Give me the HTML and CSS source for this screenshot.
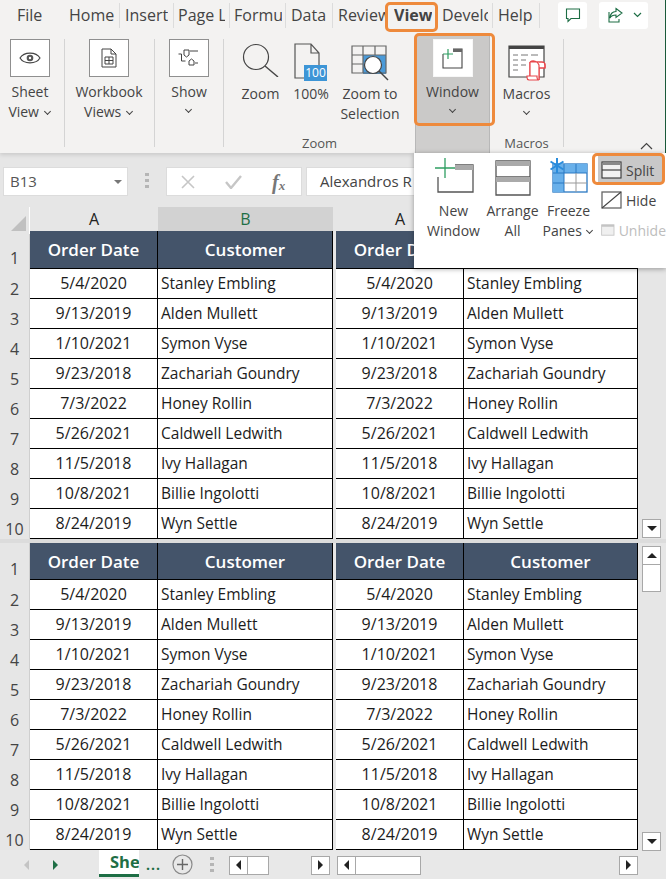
FILE: index.html
```html
<!DOCTYPE html>
<html lang="en">
<head>
<meta charset="utf-8">
<title>Excel view split</title>
<link rel="stylesheet" href="styles.css">
</head>
<body>
<div class="app">
  <header class="ribbon">
    <nav class="tabs">
      <span class="tab w-file"><span class="tt">File</span></span>
      <span class="tab w-home sep"><span class="tt">Home</span></span>
      <span class="tab w-insert sep"><span class="tt">Insert</span></span>
      <span class="tab w-page sep"><span class="tt">Page L</span></span>
      <span class="tab w-form sep"><span class="tt">Formu</span></span>
      <span class="tab w-data sep"><span class="tt">Data</span></span>
      <span class="tab w-review"><span class="tt">Review</span></span>
      <span class="tab w-view active"><span class="tt">View</span></span>
      <span class="tab w-dev sep"><span class="tt">Develo</span></span>
      <span class="tab w-help sep"><span class="tt">Help</span></span>
      <span class="tabbtn comment">
        <svg width="16" height="16" viewBox="0 0 16 16"><path d="M1.500 2h13v9.500H6L3 14.500v-3H1.500z" fill="none" stroke="#1e6e45" stroke-width="1.100"/></svg>
      </span>
      <span class="tabbtn share">
        <svg width="18" height="18" viewBox="0 0 18 18"><path d="M10 2.500l6 4.500-6 4.500V9c-3 0-5 1-6 3 0-4 2.500-6.500 6-6.500z M3 6v10h10v-3" fill="none" stroke="#1e6e45" stroke-width="1.100"/></svg>
        <svg width="9" height="6" viewBox="0 0 9 6"><path d="M1 1l3.500 3.500L8 1" fill="none" stroke="#1e6e45" stroke-width="1.200"/></svg>
      </span>
    </nav>
    <div class="groups">
      <div class="rb-btn g-sheet">
        <span class="iconbox">
          <svg width="22" height="14" viewBox="0 0 22 14"><path d="M1 7c4-6.500 16-6.500 20 0-4 6.500-16 6.500-20 0z" fill="none" stroke="#444" stroke-width="1.200"/><circle cx="11" cy="7" r="3.300" fill="#555"/><circle cx="11" cy="7" r="1.200" fill="#fff"/></svg>
        </span>
        <span class="lbl">Sheet<br>View <i class="chev"></i></span>
      </div>
      <div class="rb-sep s1"></div>
      <div class="rb-btn g-book">
        <span class="iconbox">
          <svg width="16" height="20" viewBox="0 0 16 20"><path d="M1 1h9l5 5v13H1z M10 1v5h5" fill="none" stroke="#444"/><path d="M4 9h8v7H4z M8 9v7 M4 12.500h8" fill="none" stroke="#444"/></svg>
        </span>
        <span class="lbl">Workbook<br>Views <i class="chev"></i></span>
      </div>
      <div class="rb-sep s2"></div>
      <div class="rb-btn g-show">
        <span class="iconbox">
          <svg width="22" height="18" viewBox="0 0 22 18"><path d="M6 1h5v5l-2.500 2L6 6z M0.500 5h3v7h4 M12 2h8 M17 14h3" fill="none" stroke="#444"/><path d="M11 16v-4l2.500-2 2.500 2v4z" fill="none" stroke="#444"/></svg>
        </span>
        <span class="lbl">Show<br><i class="chev solo"></i></span>
      </div>
      <div class="rb-sep s3"></div>
      <div class="zoomgroup">
        <div class="zoomitems">
          <div class="rb-btn big w-zoom">
            <svg class="bigicon" width="40" height="34" viewBox="0 0 40 34"><circle cx="15" cy="14" r="12.500" fill="none" stroke="#444" stroke-width="1.200"/><path d="M24 23l13 11" stroke="#444" stroke-width="1.400"/></svg>
            <span class="lbl">Zoom</span>
          </div>
          <div class="rb-btn big w-100">
            <svg class="bigicon" width="36" height="36" viewBox="0 0 36 36"><path d="M2 1h16l8 9v25H2z M18 1v9h8" fill="none" stroke="#555" stroke-width="1.200"/></svg>
            <span class="pct">100</span>
            <span class="lbl">100%</span>
          </div>
          <div class="rb-btn big w-sel">
            <svg class="bigicon" width="38" height="36" viewBox="0 0 38 36"><rect x="12" y="10" width="23" height="19" fill="#4a9ad8"/><path d="M1 1h34v27H1z M1 10h34 M1 19h11 M12 1v27 M24 1v9" fill="none" stroke="#666" stroke-width="1.200"/><circle cx="22" cy="20" r="8.500" fill="#fff" stroke="#444" stroke-width="1.200"/><path d="M28 26l9 9" stroke="#444" stroke-width="1.400"/></svg>
            <span class="lbl">Zoom to<br>Selection</span>
          </div>
        </div>
        <span class="grouplbl">Zoom</span>
      </div>
      <div class="windowcol">
        <div class="rb-btn g-win">
          <span class="iconbox">
            <svg width="21" height="21" viewBox="0 0 21 21"><path d="M1 6v14h19V1h-9" fill="none" stroke="#444" stroke-width="1.100"/><rect x="11" y="1" width="9" height="3" fill="#666"/><path d="M6 1v10 M1 6h10" fill="none" stroke="#2f9e62" stroke-width="1.200"/></svg>
          </span>
          <span class="lbl">Window<br><i class="chev solo"></i></span>
        </div>
      </div>
      <div class="macrocol">
        <div class="rb-btn big w-mac">
          <svg class="bigicon" width="38" height="36" viewBox="0 0 38 36"><path d="M1 1h35v31H1z" fill="#fff" stroke="#444" stroke-width="1.200"/><rect x="1" y="1" width="35" height="3" fill="#444"/><path d="M5 10h5 M13 10h7 M23 10h7 M5 15h5 M13 15h5 M5 20h5 M13 20h5 M5 25h5" stroke="#777"/><path d="M22 17h12a3 3 0 0 1 3 3v3h-6v12M22 17v14" fill="#fff" stroke="#e8474c" stroke-width="1.200"/><path d="M22 17h9v18H22z" fill="#fff"/><path d="M22 17h12a3 3 0 0 1 3 3v3h-6M22 17a6 6 0 0 1 9 3v15M22 17v14" fill="none" stroke="#e8474c" stroke-width="1.200"/><path d="M19 31h10v1.500a2.500 2.500 0 0 0 2 2.500H21a2.500 2.500 0 0 1-2-2.500z" fill="#fff" stroke="#e8474c" stroke-width="1.200"/></svg>
          <span class="lbl">Macros<br><i class="chev solo"></i></span>
        </div>
        <span class="grouplbl">Macros</span>
      </div>
      <div class="rb-sep s4"></div>
      <svg class="collapse" width="13" height="8" viewBox="0 0 13 8"><path d="M1 7l5.500-5.500L12 7" fill="none" stroke="#444" stroke-width="1.200"/></svg>
    </div>
  </header>

  <div class="formulabar">
    <div class="namebox">B13<i class="caret"></i></div>
    <div class="grip"></div>
    <div class="fxbox">
      <svg width="14" height="14" viewBox="0 0 14 14"><path d="M1 1l12 12M13 1L1 13" stroke="#c6c6c6" stroke-width="1.600"/></svg>
      <svg width="17" height="14" viewBox="0 0 17 14"><path d="M1 7l5 6L16 1" fill="none" stroke="#c6c6c6" stroke-width="2.400"/></svg>
      <span class="fx">f<sub>x</sub></span>
    </div>
    <div class="formula">Alexandros R</div>
  </div>

  <section class="sheet">
    <div class="pane top">
      <div class="cells">
        <div class="colhead">
          <div class="corner"><i></i></div>
          <div class="ch">A</div>
          <div class="ch sel">B</div>
          <div class="gapcell"></div>
          <div class="ch">A</div>
          <div class="ch">B</div>
        </div>
        <div class="row head"><div class="rh">1</div><div class="c">Order Date</div><div class="c">Customer</div><div class="gapcell"></div><div class="c">Order Date</div><div class="c">Customer</div></div>
        <div class="row"><div class="rh">2</div><div class="c d">5/4/2020</div><div class="c">Stanley Embling</div><div class="gapcell"></div><div class="c d">5/4/2020</div><div class="c">Stanley Embling</div></div>
        <div class="row"><div class="rh">3</div><div class="c d">9/13/2019</div><div class="c">Alden Mullett</div><div class="gapcell"></div><div class="c d">9/13/2019</div><div class="c">Alden Mullett</div></div>
        <div class="row"><div class="rh">4</div><div class="c d">1/10/2021</div><div class="c">Symon Vyse</div><div class="gapcell"></div><div class="c d">1/10/2021</div><div class="c">Symon Vyse</div></div>
        <div class="row"><div class="rh">5</div><div class="c d">9/23/2018</div><div class="c">Zachariah Goundry</div><div class="gapcell"></div><div class="c d">9/23/2018</div><div class="c">Zachariah Goundry</div></div>
        <div class="row"><div class="rh">6</div><div class="c d">7/3/2022</div><div class="c">Honey Rollin</div><div class="gapcell"></div><div class="c d">7/3/2022</div><div class="c">Honey Rollin</div></div>
        <div class="row"><div class="rh">7</div><div class="c d">5/26/2021</div><div class="c">Caldwell Ledwith</div><div class="gapcell"></div><div class="c d">5/26/2021</div><div class="c">Caldwell Ledwith</div></div>
        <div class="row"><div class="rh">8</div><div class="c d">11/5/2018</div><div class="c">Ivy Hallagan</div><div class="gapcell"></div><div class="c d">11/5/2018</div><div class="c">Ivy Hallagan</div></div>
        <div class="row"><div class="rh">9</div><div class="c d">10/8/2021</div><div class="c">Billie Ingolotti</div><div class="gapcell"></div><div class="c d">10/8/2021</div><div class="c">Billie Ingolotti</div></div>
        <div class="row"><div class="rh">10</div><div class="c d">8/24/2019</div><div class="c">Wyn Settle</div><div class="gapcell"></div><div class="c d">8/24/2019</div><div class="c">Wyn Settle</div></div>
      </div>
      <div class="vscroll">
        <span class="vspace"></span>
        <span class="sb-btn"><i class="tri down"></i></span>
      </div>
    </div>
    <div class="splitbar"></div>
    <div class="pane bottom">
      <div class="cells">
        <div class="row head"><div class="rh">1</div><div class="c">Order Date</div><div class="c">Customer</div><div class="gapcell"></div><div class="c">Order Date</div><div class="c">Customer</div></div>
        <div class="row"><div class="rh">2</div><div class="c d">5/4/2020</div><div class="c">Stanley Embling</div><div class="gapcell"></div><div class="c d">5/4/2020</div><div class="c">Stanley Embling</div></div>
        <div class="row"><div class="rh">3</div><div class="c d">9/13/2019</div><div class="c">Alden Mullett</div><div class="gapcell"></div><div class="c d">9/13/2019</div><div class="c">Alden Mullett</div></div>
        <div class="row"><div class="rh">4</div><div class="c d">1/10/2021</div><div class="c">Symon Vyse</div><div class="gapcell"></div><div class="c d">1/10/2021</div><div class="c">Symon Vyse</div></div>
        <div class="row"><div class="rh">5</div><div class="c d">9/23/2018</div><div class="c">Zachariah Goundry</div><div class="gapcell"></div><div class="c d">9/23/2018</div><div class="c">Zachariah Goundry</div></div>
        <div class="row"><div class="rh">6</div><div class="c d">7/3/2022</div><div class="c">Honey Rollin</div><div class="gapcell"></div><div class="c d">7/3/2022</div><div class="c">Honey Rollin</div></div>
        <div class="row"><div class="rh">7</div><div class="c d">5/26/2021</div><div class="c">Caldwell Ledwith</div><div class="gapcell"></div><div class="c d">5/26/2021</div><div class="c">Caldwell Ledwith</div></div>
        <div class="row"><div class="rh">8</div><div class="c d">11/5/2018</div><div class="c">Ivy Hallagan</div><div class="gapcell"></div><div class="c d">11/5/2018</div><div class="c">Ivy Hallagan</div></div>
        <div class="row"><div class="rh">9</div><div class="c d">10/8/2021</div><div class="c">Billie Ingolotti</div><div class="gapcell"></div><div class="c d">10/8/2021</div><div class="c">Billie Ingolotti</div></div>
        <div class="row"><div class="rh">10</div><div class="c d">8/24/2019</div><div class="c">Wyn Settle</div><div class="gapcell"></div><div class="c d">8/24/2019</div><div class="c">Wyn Settle</div></div>
      </div>
      <div class="vscroll">
        <span class="sb-btn"><i class="tri up"></i></span>
        <span class="sb-thumb"></span>
        <span class="vspace"></span>
        <span class="sb-btn"><i class="tri down"></i></span>
      </div>
    </div>
  </section>

  <footer class="tabbar">
    <i class="nav prev"></i>
    <i class="nav next"></i>
    <div class="sheettab">She</div>
    <span class="more">...</span>
    <span class="plus">
      <svg width="21" height="21" viewBox="0 0 21 21"><circle cx="10.500" cy="10.500" r="9.500" fill="none" stroke="#8a8a8a" stroke-width="1.200"/><path d="M10.500 5v11M5 10.500h11" stroke="#666" stroke-width="1.400"/></svg>
    </span>
    <div class="grip small"></div>
    <div class="hscroll one">
      <span class="hb"><i class="tri left"></i></span>
      <span class="hthumb t1"></span>
      <span class="hspace"></span>
      <span class="hb"><i class="tri right"></i></span>
    </div>
    <div class="hscroll two">
      <span class="hb"><i class="tri left"></i></span>
      <span class="hthumb t2"></span>
      <span class="hspace"></span>
      <span class="hb"><i class="tri right"></i></span>
    </div>
  </footer>

  <aside class="popup">
    <div class="pop-btn b-new">
      <svg width="40" height="39" viewBox="0 0 40 39"><path d="M4 20V35H39V8H21" fill="none" stroke="#555" stroke-width="1.300"/><rect x="21" y="8" width="18" height="5" fill="#aaa"/><path d="M11 1v20M1 11h20" stroke="#2f9e62" stroke-width="1.300"/></svg>
      <span>New<br>Window</span>
    </div>
    <div class="pop-btn b-arr">
      <svg width="36" height="39" viewBox="0 0 36 39"><path d="M1 4h34v34H1z M1 20h34" fill="none" stroke="#555" stroke-width="1.300"/><rect x="1" y="4" width="34" height="5" fill="#aaa"/><rect x="1" y="20" width="34" height="5" fill="#aaa"/></svg>
      <span>Arrange<br>All</span>
    </div>
    <div class="pop-btn b-frz">
      <svg width="38" height="39" viewBox="0 0 38 39"><rect x="3" y="7" width="34" height="28" fill="#fff" stroke="#2a78c2" stroke-width="1.300"/><rect x="14" y="7" width="23" height="9" fill="#69b0ea"/><rect x="3" y="7" width="11" height="28" fill="#69b0ea"/><path d="M3 16h34M14 7v28" stroke="#2a78c2"/><path d="M14 26h23M26 16v19" stroke="#999"/><path d="M26 7v9M3 26h11" stroke="#2a78c2"/><path d="M7 1v15M0.500 4.500l13 8M13.500 4.500l-13 8" stroke="#2a8cdc" stroke-width="2"/></svg>
      <span>Freeze<br>Panes <i class="chev"></i></span>
    </div>
    <div class="pop-list">
      <div class="pop-item on">
        <svg width="21" height="18" viewBox="0 0 21 18"><rect x="1" y="1" width="19" height="16" fill="#f2f2f2" stroke="#333" stroke-width="1.100"/><rect x="1.500" y="1.500" width="18" height="2.500" fill="#8a8a8a"/><path d="M1 9h19" stroke="#333" stroke-width="1.100"/></svg>
        <span>Split</span>
      </div>
      <div class="pop-item">
        <svg width="21" height="18" viewBox="0 0 21 18"><rect x="1" y="1" width="19" height="16" fill="none" stroke="#666" stroke-width="1.300"/><path d="M1 17L20 1" stroke="#444" stroke-width="1.100"/></svg>
        <span>Hide</span>
      </div>
      <div class="pop-item off">
        <svg width="21" height="18" viewBox="0 0 21 18"><rect x="1" y="1" width="19" height="16" fill="#f0f0f0" stroke="#c4c4c4" stroke-width="1.300"/><rect x="1" y="1" width="19" height="3" fill="#c4c4c4"/></svg>
        <span>Unhide</span>
      </div>
    </div>
  </aside>

  <div class="mark m-view"></div>
  <div class="mark m-window"></div>
  <div class="mark m-split"></div>
</div>
</body>
</html>
```
FILE: styles.css
```css
* { box-sizing: border-box; }
html, body { margin: 0; padding: 0; }
body { background: #e6e6e6; font-family: "Open Sans", "Noto Sans", sans-serif; color: #444; }
.app { position: relative; width: 666px; height: 879px; overflow: hidden; display: flex; flex-direction: column; }

/* ribbon */
.ribbon { height: 153px; background: #f3f2f1; display: flex; flex-direction: column; box-shadow: 0 2px 4px rgba(0,0,0,.12); position: relative; z-index: 1; border-right: 1px solid #1a5a3a; }
.tabs { height: 30px; display: flex; align-items: center; font-size: 16px; }
.tab { display: flex; align-items: center; height: 25px; white-space: nowrap; flex: none; }
.tab.sep { border-right: 1px solid #dcdcdc; }
.tt { display: block; overflow: hidden; }
.w-file { width: 60px; padding-left: 17px; }
.w-home { width: 60px; padding-left: 9px; }
.w-insert { width: 54px; padding-left: 5px; }
.w-page { width: 56px; padding-left: 4px; }
.w-page .tt { width: 47px; }
.w-form { width: 56px; padding-left: 4px; }
.w-form .tt { width: 48px; }
.w-data { width: 47px; padding-left: 5px; }
.w-review { width: 55px; padding-left: 5px; }
.w-review .tt { width: 47px; }
.w-view { width: 48px; padding-left: 6px; font-weight: 700; }
.w-dev { width: 57px; padding-left: 6px; }
.w-dev .tt { width: 46px; }
.w-help { width: 47px; padding-left: 5px; }
.tabbtn { display: flex; align-items: center; justify-content: center; height: 27px; background: #fff; border-radius: 3px; flex: none; }
.comment { width: 29px; margin-left: 18px; }
.share { width: 49px; margin-left: 12px; gap: 9px; }

.groups { flex: 1; display: flex; position: relative; }
.rb-btn { display: flex; flex-direction: column; align-items: center; }
.iconbox { width: 40px; height: 38px; margin-top: 9px; background: #fff; border: 1px solid #8f8f8f; display: flex; align-items: center; justify-content: center; }
.lbl { font-size: 14px; line-height: 20px; text-align: center; margin-top: 5px; color: #444; white-space: nowrap; }
.chev { display: inline-block; width: 5px; height: 5px; border-right: 1px solid #444; border-bottom: 1px solid #444; transform: rotate(45deg); margin: 0 2px 3px 2px; }
.chev.solo { margin: 0; transform: translateY(-5px) rotate(45deg); }
.rb-sep { width: 1px; background: #d4d4d4; margin-top: 9px; height: 108px; flex: none; }
.g-sheet { width: 60px; }
.s1 { margin-left: 4px; }
.g-book { width: 88px; }
.s2 { margin-left: 1px; }
.g-show { width: 68px; }
.zoomgroup { display: flex; flex-direction: column; width: 191px; flex: none; }
.zoomitems { display: flex; flex: 1; }
.big { position: relative; }
.bigicon { margin-top: 13px; }
.big .lbl { margin-top: 7px; }
.w-zoom { width: 70px; padding-left: 3px; }
.w-100 { width: 34px; }
.w-100 .bigicon { margin-top: 13px; }
.w-100 .lbl { margin-top: 5px; }
.w-sel { width: 87px; padding-right: 3px; }
.w-sel .bigicon { margin-top: 15px; }
.w-sel .lbl { margin-top: 3px; }
.pct { position: absolute; left: 10px; top: 35px; width: 23px; height: 16px; background: #3d95d6; color: #fff; font-size: 12px; line-height: 16px; text-align: center; }
.grouplbl { font-size: 13px; line-height: 16px; text-align: center; height: 18px; color: #555; }
.windowcol { width: 75px; background: #cfcecd; margin-top: 6px; border-left: 1px solid #b8b8b8; border-right: 1px solid #b8b8b8; flex: none; }
.g-win { width: 100%; background: #cac9c8; height: 88px; }
.g-win .iconbox { margin-top: 3px; border-color: #f7f7f7; }
.macrocol { width: 73px; display: flex; flex-direction: column; justify-content: space-between; align-items: center; flex: none; }
.w-mac .bigicon { margin-top: 15px; }
.w-mac .lbl { margin-top: 3px; }
.collapse { position: absolute; right: 12px; bottom: 3px; }

/* formula bar */
.formulabar { height: 54px; padding: 14px 0 10px 3px; display: flex; background: #e6e6e6; }
.namebox { width: 125px; height: 29px; background: #fff; border: 1px solid #dcdcdc; font-size: 15px; line-height: 27px; padding-left: 6px; position: relative; color: #555; }
.caret { position: absolute; right: 5px; top: 12px; border: 4px solid transparent; border-top-color: #777; border-bottom: 0; }
.grip { width: 4px; height: 16px; margin: 6px 17px 0 17px; background: repeating-linear-gradient(#b5b5b5 0 3px, transparent 3px 6px); flex: none; }
.grip.small { margin: 0 15px 0 17px; }
.fxbox { width: 136px; height: 29px; background: #fff; border: 1px solid #dcdcdc; display: flex; align-items: center; gap: 30px; padding-left: 14px; }
.fx { font-family: "Liberation Serif", serif; font-style: italic; font-weight: 700; font-size: 20px; color: #777; line-height: 1; }
.fx sub { font-size: 13px; vertical-align: -1px; }
.formula { flex: 1; height: 29px; margin-left: 4px; background: #fff; font-size: 15px; line-height: 27px; padding-left: 13px; color: #444; border: 1px solid #dcdcdc; white-space: nowrap; overflow: hidden; }

/* sheet */
.sheet { flex: 1; display: flex; flex-direction: column; background: #e6e6e6; }
.pane { display: flex; }
.pane.top { height: 332px; }
.pane.bottom { height: 307px; }
.cells { width: 638px; display: flex; flex-direction: column; flex: none; }
.colhead { display: grid; grid-template-columns: 30px 128px 175px 3px 128px 174px; height: 24px; }
.row { display: grid; grid-template-columns: 30px 128px 175px 3px 128px 174px; height: 30px; }
.row.head { height: 38px; }
.pane.bottom .row.head { height: 37px; }
.corner { position: relative; border-right: 1px solid #fff; }
.corner i { position: absolute; right: 3px; bottom: 3px; width: 0; height: 0; border-style: solid; border-width: 0 0 15px 15px; border-color: transparent transparent #c0c0c0 transparent; }
.ch { font-size: 16px; line-height: 25px; text-align: center; color: #222; background: #e6e6e6; }
.ch.sel { background: #d2d2d2; color: #1e6e45; border-bottom: 2px solid #1e6e45; }
.gapcell { background: #e6e6e6; }
.rh { font-size: 16px; line-height: 18px; text-align: center; color: #444; display: flex; align-items: flex-end; justify-content: center; padding-bottom: 1px; border-right: 1px solid #cfcfcf; background: #e6e6e6; }
.c { background: #fff; border-right: 1px solid #000; border-bottom: 1px solid #000; font-size: 15.500px; color: #1c1c1c; display: flex; align-items: center; padding: 0 0 2px 3px; white-space: nowrap; overflow: hidden; }
.c.d { justify-content: center; padding-left: 0; font-size: 16px; }
.head .c { background: #44546a; color: #fff; font-weight: 600; font-size: 17px; justify-content: center; padding: 0; }
.head .rh { padding-bottom: 2px; }
.splitbar { height: 4px; background: #dcdcdc; }

.vscroll { flex: 1; display: flex; flex-direction: column; align-items: flex-start; padding: 0 0 1px 4px; }
.bottom .vscroll { padding: 3px 0 0 4px; margin-bottom: -1px; position: relative; z-index: 2; }
.vspace { flex: 1; }
.sb-btn { width: 19px; height: 19px; background: #fff; border: 1px solid #a8a8a8; display: flex; align-items: center; justify-content: center; flex: none; }
.sb-thumb { width: 19px; height: 27px; background: #fff; border: 1px solid #a8a8a8; border-top: 0; flex: none; }
.tri { display: block; width: 0; height: 0; border-style: solid; border-color: transparent; }
.tri.down { border-width: 5px 5px 0 5px; border-top-color: #222; }
.tri.up { border-width: 0 5px 5px 5px; border-bottom-color: #222; }
.tri.left { border-width: 5px 5px 5px 0; border-right-color: #222; }
.tri.right { border-width: 5px 0 5px 5px; border-left-color: #222; }

/* tab bar */
.tabbar { height: 29px; display: flex; align-items: center; background: #e8e8e8; padding-left: 24px; }
.nav { display: block; width: 0; height: 0; border-style: solid; border-color: transparent; flex: none; }
.nav.prev { border-width: 5px 5px 5px 0; border-right-color: #c4c4c4; }
.nav.next { border-width: 5px 0 5px 5px; border-left-color: #1e6e45; margin-left: 24px; }
.sheettab { width: 40px; height: 27px; margin-left: 41px; background: #fff; color: #1e6e45; font-weight: 700; font-size: 16.500px; line-height: 23px; padding-left: 11px; border-bottom: 3px solid #1e6e45; overflow: hidden; align-self: flex-start; flex: none; }
.more { width: 33px; padding-left: 7px; font-weight: 700; font-size: 14px; letter-spacing: 1px; color: #1e6e45; flex: none; }
.plus { width: 21px; height: 21px; flex: none; display: block; }
.plus svg { display: block; }
.hscroll { display: flex; height: 19px; align-items: stretch; flex: none; margin-top: 1px; }
.hscroll.one { width: 101px; }
.hscroll.two { width: 301px; margin-left: 7px; }
.hb { width: 19px; background: #fff; border: 1px solid #a8a8a8; display: flex; align-items: center; justify-content: center; flex: none; }
.hthumb { background: #fff; border: 1px solid #a8a8a8; border-left: 0; flex: none; }
.t1 { width: 21px; }
.t2 { width: 65px; }
.hspace { flex: 1; }

/* overlays */
.popup { position: absolute; left: 414px; top: 153px; width: 252px; height: 115px; background: #fff; box-shadow: 0 1px 5px rgba(0,0,0,.35); z-index: 3; display: flex; padding: 4px 0 0 7px; font-size: 14px; color: #444; }
.pop-btn { display: flex; flex-direction: column; align-items: center; text-align: center; line-height: 20px; white-space: nowrap; flex: none; }
.pop-btn svg { margin-bottom: 5px; flex: none; }
.b-new { width: 65px; }
.b-arr { width: 53px; }
.b-frz { width: 59px; }
.pop-list { display: flex; flex-direction: column; flex: 1; margin-top: -1px; min-width: 0; }
.pop-item { display: flex; align-items: center; gap: 4px; height: 30px; padding-left: 3px; white-space: nowrap; overflow: hidden; flex: none; }
.pop-item.on { background: #c8c8c8; height: 27px; margin-bottom: 2px; width: 64px; padding-top: 1px; }
.pop-item.off span { color: #bdbdbd; }

.mark { position: absolute; border: 3.500px solid #ee8a3c; border-radius: 5px; z-index: 4; pointer-events: none; }
.m-view { left: 385px; top: 2px; width: 53px; height: 30px; }
.m-window { left: 414px; top: 33px; width: 81px; height: 93px; }
.m-split { left: 592px; top: 153px; width: 73px; height: 32px; }
```
